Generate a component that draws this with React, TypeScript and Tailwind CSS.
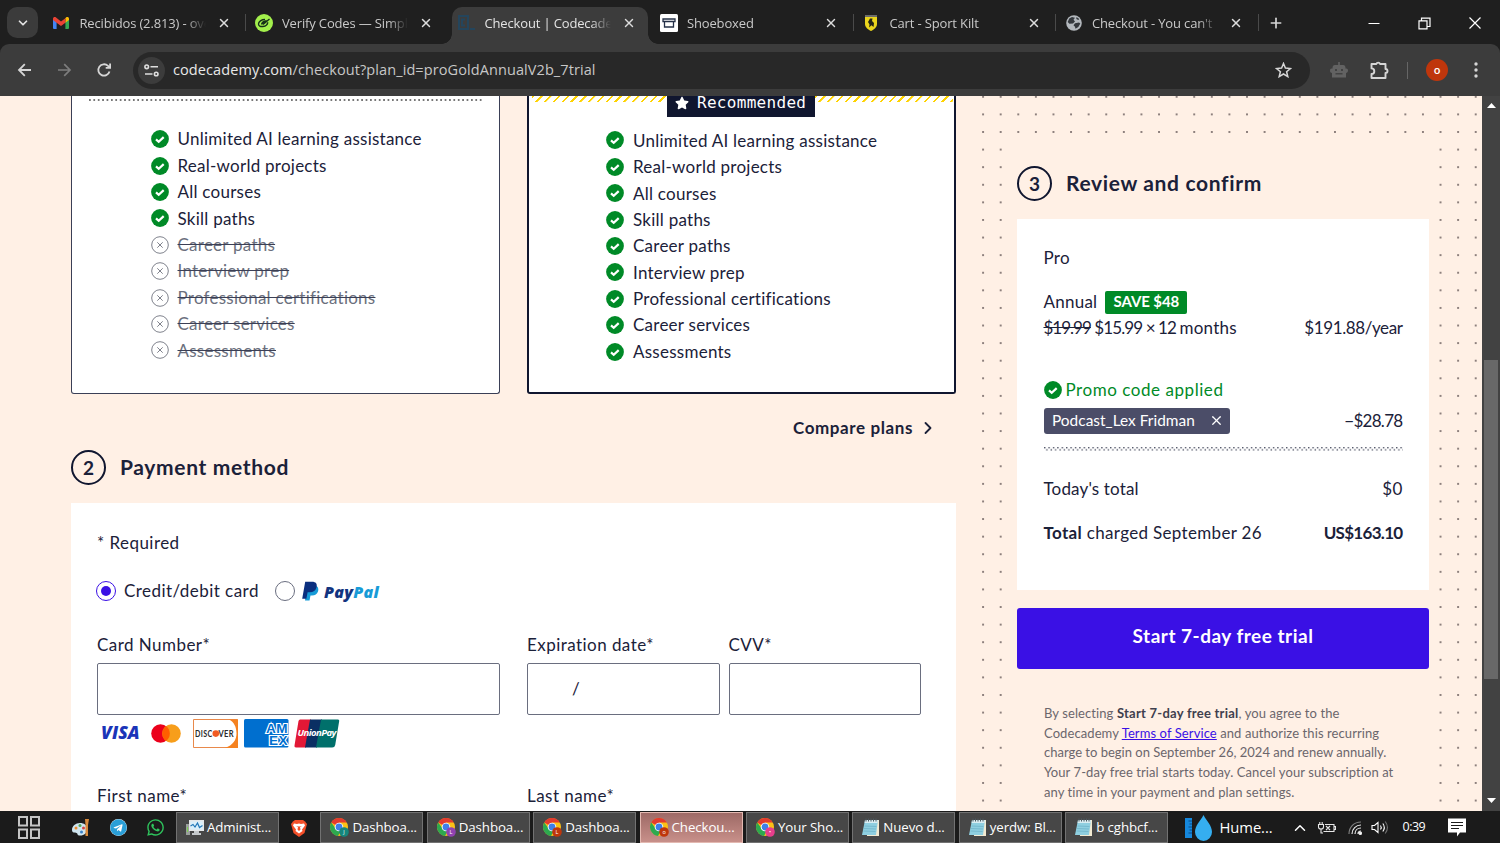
import { ReactNode } from "react";
import clsx from "clsx";
import { FaStar, FaTelegram, FaWhatsapp } from "react-icons/fa";
import { FiChevronDown, FiChevronRight, FiChevronUp, FiPlus, FiX } from "react-icons/fi";

type Feature = {
  label: string;
  included: boolean;
};

const featureNames = [
  "Unlimited AI learning assistance",
  "Real-world projects",
  "All courses",
  "Skill paths",
  "Career paths",
  "Interview prep",
  "Professional certifications",
  "Career services",
  "Assessments",
];

const basicFeatures: Feature[] = featureNames.map((label, index) => ({
  label,
  included: index < 4,
}));

const proFeatures: Feature[] = featureNames.map((label) => ({
  label,
  included: true,
}));

/* ---------- browser icons ---------- */

function GmailIcon() {
  return (
    <svg width="16" height="12" viewBox="0 0 16 12">
      <path d="M0 2v9a1 1 0 0 0 1 1h2.600V4.600z" fill="#4285f4" />
      <path d="M16 2v9a1 1 0 0 1-1 1h-2.600V4.600z" fill="#34a853" />
      <path d="M12.400 1.200v4.600L16 3.100V1.800C16 .2 14.200-.4 13 .6z" fill="#fbbc04" />
      <path d="M0 1.800C0 .2 1.800-.4 3 .6l5 3.800 4.400-3.200v4.600L8 9.100 3.600 5.800 0 3.100z" fill="#ea4335" />
    </svg>
  );
}

function SimplyIcon() {
  return (
    <svg width="18" height="18" viewBox="0 0 18 18">
      <circle cx="9" cy="9" r="9" fill="#a3f04c" />
      <g fill="none" stroke="#17301a" strokeWidth="1.400">
        <path d="M10 5.500C6.500 5.500 3.500 7.500 3.500 10c0 2 2 2.800 4.200 2.500 3-.4 5-2.300 5-4.300" />
        <path d="M6.500 10.500c.5-2 2-3.300 4-3.500l-2.500 3.500 6.500-5.500" />
      </g>
    </svg>
  );
}

function CodecademyIcon() {
  return (
    <svg width="18" height="18" viewBox="0 0 18 18" fill="none" stroke="#24455c" strokeWidth="2">
      <path d="M2 2h9v13H2zM8 5.500H5v6h3M13 15h5" />
    </svg>
  );
}

function ShoeboxedIcon() {
  return (
    <svg width="18" height="18" viewBox="0 0 18 18">
      <rect width="18" height="18" rx="1.500" fill="#fff" />
      <path d="M3 5h12v2.500H3zM4.500 8v5h9V8" fill="none" stroke="#253047" strokeWidth="1.300" />
    </svg>
  );
}

function KiltIcon() {
  return (
    <svg width="14" height="17" viewBox="0 0 14 17">
      <path d="M1 1h12v9c0 3.500-3 5.500-6 7-3-1.500-6-3.500-6-7z" fill="#ead51d" />
      <path d="M1 1h12v2H1z" fill="#6c6c6c" />
      <path d="M6 4.500h2.500L8 7l2 2-.5 4-2-1.800L5 13.500l.500-3L4 8z" fill="#242416" />
    </svg>
  );
}

function GlobeIcon() {
  return (
    <svg width="16" height="16" viewBox="0 0 16 16">
      <circle cx="8" cy="8" r="7.800" fill="#b3b8bd" />
      <path
        d="M3.200 3.600 6 2l3 .8-1.500 2L9 6.500l-2 2-3.600.2L1.700 7zM9 8.200l4-.8 1.300 1.200-2 3.400-2.800 1.800-.5-2-1.500-1.500zM10.500 2l2.800 2-1 1-2-1z"
        fill="#34383d"
      />
    </svg>
  );
}

type Tab = {
  title: string;
  icon: ReactNode;
  active?: boolean;
  separator?: boolean;
};

const tabs: Tab[] = [
  { title: "Recibidos (2.813) - overview", icon: <GmailIcon />, separator: true },
  { title: "Verify Codes — SimplyCodes", icon: <SimplyIcon /> },
  { title: "Checkout | Codecademy", icon: <CodecademyIcon />, active: true },
  { title: "Shoeboxed", icon: <ShoeboxedIcon />, separator: true },
  { title: "Cart - Sport Kilt", icon: <KiltIcon />, separator: true },
  { title: "Checkout - You can't", icon: <GlobeIcon />, separator: true },
];

function BrowserTab({ title, icon, active, separator }: Tab) {
  return (
    <div className="relative flex h-full w-[202.500px] shrink-0 items-end px-[3px]">
      {active && (
        <>
          <span className="absolute bottom-0 left-[-7px] size-[10px] bg-[radial-gradient(circle_at_0_0,transparent_9.500px,#3c3c3c_10px)]" />
          <span className="absolute right-[-7px] bottom-0 size-[10px] bg-[radial-gradient(circle_at_100%_0,transparent_9.500px,#3c3c3c_10px)]" />
        </>
      )}
      <div
        className={clsx(
          "flex h-[37px] w-full items-center rounded-t-[10px] pb-[6px] pl-[5px]",
          active && "bg-[#3c3c3c]"
        )}
      >
        <span className="flex w-[19px] justify-center">{icon}</span>
        <span
          className={clsx(
            "ml-[9px] w-[127px] overflow-hidden text-[13px] leading-5 tracking-[-0.15px] whitespace-nowrap",
            "[mask-image:linear-gradient(to_right,#000_106px,transparent_126px)]",
            active ? "text-[#e3e3e3]" : "text-[#c9c9c9]"
          )}
        >
          {title}
        </span>
        <FiX size={14} strokeWidth={2.500} className="ml-[10px] text-[#dcdcdc]" />
      </div>
      {separator && <span className="absolute top-[14px] right-0 h-[17px] w-px bg-[#4a4a4a]" />}
    </div>
  );
}

function TabStrip() {
  return (
    <div className="flex h-11 bg-[#1f1f1f] pl-[7px]">
      <button className="mt-[7px] mr-[5.500px] flex h-[31px] w-[31px] items-center justify-center rounded-[10px] bg-[#3b3b3b] text-[#e3e3e3]">
        <FiChevronDown size={14} strokeWidth={3} />
      </button>
      {tabs.map((tab) => (
        <BrowserTab key={tab.title} {...tab} />
      ))}
      <button className="mt-[15px] ml-[9px] flex size-4 items-center justify-center text-[#d6d6d6]">
        <FiPlus size={16} strokeWidth={2.500} />
      </button>
      <div className="mt-[15px] ml-auto flex h-4 items-center gap-[37px] pr-[18px] text-white">
        <svg width="14" height="14" viewBox="0 0 14 14" stroke="currentColor">
          <path d="M1.500 7.500h11" />
        </svg>
        <svg width="13" height="13" viewBox="0 0 13 13" fill="none" stroke="currentColor" strokeWidth="1.200">
          <path d="M1 3.800h8v8H1zM3.500 3.500V1.200H12V9.500H9.500" />
        </svg>
        <svg width="14" height="14" viewBox="0 0 14 14" stroke="currentColor" strokeWidth="1.200">
          <path d="m1.500 1.500 11 11m0-11-11 11" />
        </svg>
      </div>
    </div>
  );
}

function Toolbar() {
  return (
    <div className="bg-[#1f1f1f]">
      <div className="flex h-[52px] items-center rounded-t-[9px] bg-[#3c3c3c]">
        <svg className="ml-[17px]" width="16" height="16" viewBox="0 0 16 16" fill="none" stroke="#d6d6d6" strokeWidth="1.800">
          <path d="M14 8H2m5.800-5.800L2 8l5.800 5.800" />
        </svg>
        <svg className="ml-[23px]" width="16" height="16" viewBox="0 0 16 16" fill="none" stroke="#7d7d7d" strokeWidth="1.700">
          <path d="M2 8h12M8.200 2.200 14 8l-5.800 5.800" />
        </svg>
        <svg className="ml-[24px]" width="16" height="16" viewBox="0 0 16 16" fill="none" stroke="#d6d6d6" strokeWidth="1.800">
          <path d="M13.500 9.500A5.700 5.700 0 1 1 12 3.900l1.800 1.800M14.100 1.500v4.400H9.700" />
        </svg>
        <div className="ml-[21px] flex h-[37px] w-[1176.500px] items-center rounded-full bg-[#282828] pl-[5px]">
          <span className="flex size-[27px] items-center justify-center rounded-full bg-[#3c3c3c]">
            <svg width="15" height="13" viewBox="0 0 15 13" fill="none" stroke="#dedede" strokeWidth="1.600">
              <circle cx="2.700" cy="2.800" r="1.800" />
              <path d="M6.500 2.800H14M1 10h7.500" />
              <circle cx="12.200" cy="10" r="1.800" />
            </svg>
          </span>
          <span className="ml-[8px] text-[14.500px] tracking-[0.09px] text-[#c7c7c7]">
            <span className="text-[#e8e8e8]">codecademy.com</span>
            /checkout?plan_id=proGoldAnnualV2b_7trial
          </span>
          <svg className="mr-[18px] ml-auto" width="17" height="16" viewBox="0 0 17 16" fill="none" stroke="#d6d6d6" strokeWidth="1.500">
            <path d="m8.500 1.500 1.900 4.600 5 .4-3.800 3.200 1.200 4.900-4.300-2.600-4.300 2.600 1.200-4.900-3.800-3.200 5-.4z" />
          </svg>
        </div>
        <svg className="ml-[20px]" width="18" height="18" viewBox="0 0 18 18" fill="#626262">
          <path d="M8.200 1h1.600v3H13c2 0 2.500 1.500 2.500 3.500h1c1 0 1.500 1 1.500 2.200S17 12 16 12v4.500H2V12c-1 0-2-1-2-2.300s.5-2.200 1.500-2.200h1C2.500 5.500 3 4 5 4h3.200z" />
          <path d="M5 8h2v2H5zm6 0h2v2h-2zM5.500 12h7v1.500h-7z" fill="#424242" />
        </svg>
        <svg className="ml-[21px]" width="20" height="19" viewBox="0 0 20 19" fill="none" stroke="#d6d6d6" strokeWidth="1.900">
          <path d="M2.500 3h4.800a2 2 0 0 1 3.800 0H16.500v5a2 2 0 0 1 0 4v5h-14v-4a2.800 2.800 0 0 0 0-5.600z" strokeLinejoin="round" />
        </svg>
        <span className="ml-[18px] h-[17px] w-px bg-[#666]" />
        <span className="ml-[18.500px] flex size-[22px] items-center justify-center rounded-full bg-[#bf360c] text-[11px] font-semibold text-white">
          o
        </span>
        <svg className="ml-[26px]" width="4" height="16" viewBox="0 0 4 16" fill="#d6d6d6">
          <circle cx="2" cy="2" r="1.700" />
          <circle cx="2" cy="8" r="1.700" />
          <circle cx="2" cy="14" r="1.700" />
        </svg>
      </div>
    </div>
  );
}

/* ---------- checkout page ---------- */

function CheckIcon() {
  return (
    <svg className="shrink-0" width="18" height="18" viewBox="0 0 18 18">
      <circle cx="9" cy="9" r="8.900" fill="#008a27" />
      <path d="m5 9.400 2.700 2.400 5-4.700" fill="none" stroke="#fff" strokeWidth="2.200" />
    </svg>
  );
}

function CrossIcon() {
  return (
    <svg className="shrink-0" width="18" height="18" viewBox="0 0 18 18" fill="none" stroke="#70747f">
      <circle cx="9" cy="9" r="8.300" strokeWidth="0.900" />
      <path d="m6.300 6.300 5.400 5.400m0-5.400-5.400 5.400" strokeWidth="0.900" />
    </svg>
  );
}

function FeatureList({ features }: { features: Feature[] }) {
  return (
    <ul>
      {features.map(({ label, included }) => (
        <li key={label} className="flex h-[26.400px] items-center gap-[9px]">
          {included ? <CheckIcon /> : <CrossIcon />}
          <span className={clsx(!included && "text-[#6b6f7d] line-through decoration-[#3b3f55]")}>
            {label}
          </span>
        </li>
      ))}
    </ul>
  );
}

function StepTitle({ step, children }: { step: number; children: ReactNode }) {
  return (
    <h2 className="flex h-[35px] items-center text-[21px] leading-[28px] font-bold tracking-[0.65px]">
      <span className="mr-[14px] flex size-[35px] items-center justify-center rounded-full border-2 border-[#10162f] text-[19px] tracking-normal">
        {step}
      </span>
      <span className="pb-[2px]">{children}</span>
    </h2>
  );
}

function PlanCards() {
  return (
    <div className="flex gap-[27px]">
      <div className="h-[297.500px] w-[429px] rounded-b-[3px] border border-t-0 border-[#3a3f56] bg-white">
        <div className="mx-[17px] mt-[3px] h-[2px] bg-[linear-gradient(90deg,#777_1.500px,transparent_1.500px)] bg-[length:4.400px_1.500px] bg-repeat-x" />
        <div className="mt-[25px] pl-[78.500px]">
          <FeatureList features={basicFeatures} />
        </div>
      </div>
      <div className="h-[297.500px] w-[429px] rounded-b-[3px] border-2 border-t-0 border-[#10162f] bg-white">
        <div className="flex h-[21px] items-start">
          <span className="ml-[3px] h-[6px] w-[135px] bg-[repeating-linear-gradient(135deg,#ffd300_0px,#ffd300_1.500px,transparent_1.800px,transparent_6.220px)]" />
          <span className="flex h-[21px] w-[148px] items-center bg-[#10162f] pb-[8px] pl-[8px] font-['DejaVu_Sans_Mono',monospace] text-[16px] tracking-[0.3px] text-white">
            <FaStar size={14} className="mr-[8px] shrink-0" />
            Recommended
          </span>
          <span className="mr-px h-[6px] flex-1 bg-[repeating-linear-gradient(135deg,#ffd300_0px,#ffd300_1.500px,transparent_1.800px,transparent_6.220px)]" />
        </div>
        <div className="mt-[10.300px] pl-[77px]">
          <FeatureList features={proFeatures} />
        </div>
      </div>
    </div>
  );
}

function PayPalLogo() {
  return (
    <span className="flex items-center">
      <svg width="17" height="20" viewBox="0 0 17 20">
        <path d="M5 4.500h7.500c3.500.5 4.500 3 3.500 6-1 2.800-3 4-6 4H8.500l-1 5H3z" fill="#169bd7" />
        <path d="M3.200.8H10c4 0 5.400 2.200 4.600 5.400-.9 3.500-3.300 5-6.800 5H5.600l-1.200 6.600H.2z" fill="#0b2f7f" />
      </svg>
      <span className="mt-[2px] ml-[5px] font-['Open_Sans',sans-serif] text-[16px] leading-5 font-extrabold tracking-[0.3px] text-[#12347f] italic">
        Pay<span className="text-[#179bd7]">Pal</span>
      </span>
    </span>
  );
}

function CardBrands() {
  return (
    <div className="mt-[4px] flex h-[29px] items-center">
      <span className="ml-[4px] w-[40px] font-['Open_Sans',sans-serif] text-[17.500px] leading-none font-extrabold tracking-[0.1px] text-[#1a34b8] italic">
        VISA
      </span>
      <svg className="ml-[10px]" width="30" height="19" viewBox="0 0 30 19">
        <circle cx="9.500" cy="9.500" r="9.300" fill="#eb001b" />
        <circle cx="20.500" cy="9.500" r="9.300" fill="#f79e1b" />
        <path d="M15 2a9.300 9.300 0 0 1 0 15 9.300 9.300 0 0 1 0-15z" fill="#ff5f00" />
      </svg>
      <svg className="ml-[12px]" width="45" height="29" viewBox="0 0 45 29">
        <path d="M.5.500h44v28H.5z" fill="#fff" stroke="#e8894b" />
        <path d="M36 .500h9V29H32c8-3 11.500-8 11.500-14.500S41 3 36 .5z" fill="#f58220" />
        <text x="2" y="18" fontFamily="Lato, sans-serif" fontSize="9.500" fontWeight="700" fill="#2b2b2b" textLength="17.500" lengthAdjust="spacingAndGlyphs">
          DISC
        </text>
        <circle cx="22.800" cy="14.600" r="3.300" fill="#f15a22" />
        <text x="25.500" y="18" fontFamily="Lato, sans-serif" fontSize="9.500" fontWeight="700" fill="#2b2b2b" textLength="15.500" lengthAdjust="spacingAndGlyphs">
          VER
        </text>
      </svg>
      <svg className="ml-[6px]" width="45" height="29" viewBox="0 0 45 29" fontFamily="Liberation Sans, sans-serif" fontWeight="700">
        <rect width="44.500" height="28.500" rx="1.500" fill="#006fcf" />
        <g fill="#006fcf" stroke="#fff" strokeWidth="2.200" paintOrder="stroke" fontSize="12.500">
          <text x="22" y="13.500" textLength="22" lengthAdjust="spacingAndGlyphs">AM</text>
          <text x="25" y="26" textLength="19" lengthAdjust="spacingAndGlyphs">EX</text>
        </g>
      </svg>
      <svg className="ml-[5px]" width="46" height="29" viewBox="0 0 46 29">
        <path d="M6 .500h11l-5 28H2q-2 0-1.500-2L4.500 2Q5 .500 6 .500z" fill="#e21836" />
        <path d="M16 .500h12l-5 28H11z" fill="#0a2f63" />
        <path d="M27 .500h17q1.500 0 1.200 1.500l-4 24q-.500 2.500-3 2.500H22z" fill="#00706b" />
        <text x="3.500" y="17" fontFamily="Open Sans, sans-serif" fontSize="9.500" fontWeight="700" fontStyle="italic" fill="#fff" textLength="39.500">
          UnionPay
        </text>
      </svg>
    </div>
  );
}

type FieldProps = {
  label: string;
  className: string;
  children?: ReactNode;
};

function Field({ label, className, children }: FieldProps) {
  return (
    <label className={clsx("block", className)}>
      <span className="block h-[31px] leading-[26px]">{label}</span>
      <span className="flex h-[52px] items-center rounded-[2px] border border-[#6a6e7f] bg-white">
        {children}
      </span>
    </label>
  );
}

function PaymentForm() {
  return (
    <div className="h-[420px] bg-white pt-[26px] pl-[26px] tracking-[0.45px]">
      <p className="leading-[27px]">* Required</p>
      <div className="mt-[25px] ml-[-1px] flex h-[20px] items-center">
        <span className="mr-[8px] flex size-[20px] items-center justify-center rounded-full border border-[#3a10e5]">
          <span className="size-[10px] rounded-full bg-[#3a10e5]" />
        </span>
        <span className="w-[151px]">Credit/debit card</span>
        <span className="mr-[7px] size-[20px] rounded-full border border-[#6a6e7f]" />
        <PayPalLogo />
      </div>
      <div className="mt-[31px] flex">
        <Field label="Card Number*" className="w-[403px]" />
        <Field label="Expiration date*" className="ml-[27px] w-[193px]">
          <span className="pl-[44px]">/</span>
        </Field>
        <Field label="CVV*" className="ml-[8.500px] w-[192px]" />
      </div>
      <CardBrands />
      <div className="mt-[35.500px] flex">
        <Field label="First name*" className="w-[403px]" />
        <Field label="Last name*" className="ml-[27px] w-[394px]" />
      </div>
    </div>
  );
}

function Summary() {
  return (
    <div className="h-[371px] bg-white px-[26.500px] pt-[26px] leading-[26.400px]">
      <p>Pro</p>
      <div className="mt-[18px] flex items-center">
        Annual
        <span className="ml-[8px] h-[23px] w-[82px] rounded-[2px] bg-[#008a27] text-center text-[15px] leading-[21px] font-bold tracking-[-0.1px] text-white">
          SAVE $48
        </span>
      </div>
      <div className="flex justify-between">
        <span>
          <s className="tracking-[-1px]">$19.99</s>
          <span className="tracking-[-0.9px]"> $15.99 × 12 </span>
          months
        </span>
        <span className="tracking-[-0.4px]">$191.88/year</span>
      </div>
      <div className="mt-[35.500px] flex items-center gap-[4px] tracking-[0.55px] text-[#008a27]">
        <CheckIcon />
        Promo code applied
      </div>
      <div className="mt-[4px] flex h-[26px] items-center justify-between">
        <span className="flex h-[26px] w-[186px] items-center justify-between rounded-[3px] bg-[#4b4d68] pr-[6px] pl-[8.500px] text-[15.400px] tracking-[0.03px] text-white">
          Podcast_Lex Fridman
          <FiX size={15} />
        </span>
        <span className="pt-px tracking-[-0.7px]">−$28.78</span>
      </div>
      <svg className="mt-[13px] block h-[4px] w-full" fill="#4d5163">
        <pattern id="checker" width="4.400" height="4.400" patternUnits="userSpaceOnUse">
          <path d="M0 0h1.400v1.400H0zM2.200 2.200h1.400v1.400H2.200z" />
        </pattern>
        <rect width="100%" height="4" fill="url(#checker)" />
      </svg>
      <div className="mt-[25px] flex justify-between">
        <span className="tracking-[0.15px]">Today's total</span>
        <span>$0</span>
      </div>
      <div className="mt-[17.500px] flex justify-between">
        <span className="tracking-[0.33px]">
          <b>Total</b> charged September 26
        </span>
        <b className="tracking-[-0.7px]">US$163.10</b>
      </div>
    </div>
  );
}

function ReviewPanel() {
  return (
    <aside className="h-full w-[508px] bg-[radial-gradient(circle,#8d807d_0.900px,transparent_1.100px)] bg-[length:17.600px_17.600px] bg-[position:0.300px_-8px] pt-[45px] pl-[35px]">
      <div className="h-full w-[424px] bg-[#fff0e5] px-[8px] pt-[25px]">
        <StepTitle step={3}>Review and confirm</StepTitle>
        <div className="mt-[17.500px] w-[412px]">
          <Summary />
          <button className="mt-[18px] h-[61px] w-full rounded-[3px] bg-[#3a10e5] pb-[4px] text-[19px] font-bold tracking-[0.5px] text-white">
            Start 7-day free trial
          </button>
          <p className="mt-[35.500px] pl-[27px] text-[13px] leading-[19.700px] tracking-[0.09px] whitespace-nowrap text-[#6b666c]">
            By selecting <b className="tracking-[0.25px] text-[#3f3f4e]">Start 7-day free trial</b>, you agree to the
            <br />
            Codecademy <a className="text-[#3a10e5] underline">Terms of Service</a> and authorize this recurring
            <br />
            <span className="tracking-normal">charge to begin on September 26, 2024 and renew annually.</span>
            <br />
            Your 7-day free trial starts today. Cancel your subscription at
            <br />
            any time in your payment and plan settings.
          </p>
        </div>
      </div>
    </aside>
  );
}

function ScrollBar() {
  return (
    <div className="flex w-[18px] flex-col items-center bg-[#424242]">
      <svg className="mt-[7px]" width="9" height="5" viewBox="0 0 9 5" fill="#fff">
        <path d="M0 5 4.500 0 9 5z" />
      </svg>
      <div className="mt-[252px] h-[319px] w-[14px] bg-[#686868]" />
      <svg className="mt-[119px]" width="9" height="5" viewBox="0 0 9 5" fill="#fff">
        <path d="M0 0h9L4.500 5z" />
      </svg>
    </div>
  );
}

/* ---------- taskbar ---------- */

function ChromeIcon({ badge, letter }: { badge: string; letter: string }) {
  return (
    <svg className="shrink-0" width="19" height="19" viewBox="0 0 19 19">
      <circle cx="9" cy="9" r="9" fill="#fbc116" />
      <path d="M9 9 1.200 4.500A9 9 0 0 1 16.800 4.500H9z" fill="#e33b2e" />
      <path d="M1.200 4.500A9 9 0 0 0 8 17.950L12 10.500 6 11z" fill="#2da94f" />
      <circle cx="9" cy="9" r="4.300" fill="#fff" />
      <circle cx="9" cy="9" r="3.400" fill="#3f7fe8" />
      <circle cx="14" cy="14" r="4.800" fill={badge} />
      <text x="14" y="16" textAnchor="middle" fontSize="5.500" fill="#fff" fontFamily="Open Sans, sans-serif">
        {letter}
      </text>
    </svg>
  );
}

function NotepadIcon() {
  return (
    <svg className="shrink-0" width="18" height="19" viewBox="0 0 18 19">
      <path d="M4 2h13v16H5z" fill="#f2ead2" />
      <path d="M3 2h13l-2 15H0z" fill="#8fcfe0" />
      <path d="M3 2h13l-.4 3H2.600z" fill="#d9edf2" />
      <path d="M4 .500v3m2.500-3v3m2.500-3v3m2.500-3v3m2.500-3v3" stroke="#4d5a60" />
      <path d="m2.500 8 12 .5m-12.500 2 12 .5m-12.500 2 12 .5" stroke="#6fb4c9" strokeWidth="0.800" />
    </svg>
  );
}

function MonitorIcon() {
  return (
    <svg className="shrink-0" width="18" height="17" viewBox="0 0 18 17">
      <path d="M0 5h4v11H0z" fill="#9aa09c" />
      <path d="M1 8h1v5H1z" fill="#7ad04c" />
      <path d="M3 1h15v11H3z" fill="#e4e7e9" />
      <path d="M4.500 2.500h12v8h-12z" fill="#d9effa" />
      <path d="m4.500 7 2.500-1.500 2 2.500 2.500-4 2 4.500 3-2" fill="none" stroke="#2277b8" strokeWidth="1.200" />
      <path d="M8 12h5v2h2v2H6v-2h2z" fill="#c5c9cc" />
    </svg>
  );
}

type TaskProps = {
  title: string;
  icon: ReactNode;
  active?: boolean;
};

function Task({ title, icon, active }: TaskProps) {
  return (
    <div
      className={clsx(
        "mr-[3.400px] flex h-[31px] w-[103px] shrink-0 items-center border pl-[9px] text-[13.300px] tracking-[-0.1px] whitespace-nowrap text-white",
        active ? "border-[#e3b9b1] bg-linear-to-b from-[#9e6a66] to-[#c8908a]" : "border-[#727272] bg-[#474747]"
      )}
    >
      {icon}
      <span className="ml-[3px]">{title}</span>
    </div>
  );
}

function Taskbar() {
  return (
    <div className="flex h-8 items-center bg-[#1b1b1b] pt-px">
      <svg className="ml-[18px]" width="22" height="23" viewBox="0 0 22 23" fill="none" stroke="#c5c5c5" strokeWidth="2">
        <path d="M1 1h8v8.500H1zM13 1h8v8.500h-8zM1 13.500h8V22H1zM13 13.500h8V22h-8z" />
      </svg>
      <svg className="ml-[32px]" width="18" height="18" viewBox="0 0 18 18">
        <path d="M8 4c4 0 7 2 7 6s-3 7-8 6.500c-2-.2-1-2-2.500-2.500S0 14 0 11c0-4 3.500-7 8-7z" fill="#cfe5ef" />
        <circle cx="4" cy="9" r="1.500" fill="#ed8b2d" />
        <circle cx="8" cy="6.500" r="1.500" fill="#53a557" />
        <circle cx="11.500" cy="9" r="1.500" fill="#d64541" />
        <circle cx="9.500" cy="13" r="1.500" fill="#3980c6" />
        <path d="M13 0h4l-1 6v11h-2.500V6z" fill="#d98a3b" />
      </svg>
      <span className="ml-[19.500px] rounded-full bg-white">
        <FaTelegram size={17} color="#2a9fd8" />
      </span>
      <FaWhatsapp size={19} color="#2fc45d" className="mr-[11.500px] ml-[19px]" />
      <Task title="Administ..." icon={<MonitorIcon />} />
      <svg className="mr-[13px] ml-[9px]" width="16" height="18" viewBox="0 0 16 18">
        <path d="M4 1h8l2 1.500L16 5l-2.500 9L8 18l-5.500-4L0 5l2-2.500z" fill="#f4502a" />
        <path d="m3 4.500 3 .5 2-.5 2 .5 3-.5 1 2-3 4 .5 1.500L8 14.500 4.500 12 5 10.500l-3-4z" fill="#fff" />
        <path d="m5 7 2 1-.5 2.500L8 12l1.500-1.500L9 8l2-1-3 .5z" fill="#f4502a" />
      </svg>
      <Task title="Dashboa..." icon={<ChromeIcon badge="#16867c" letter="J" />} />
      <Task title="Dashboa..." icon={<ChromeIcon badge="#9142b0" letter="L" />} />
      <Task title="Dashboa..." icon={<ChromeIcon badge="#bf360c" letter="L" />} />
      <Task title="Checkou..." icon={<ChromeIcon badge="#bf360c" letter="o" />} active />
      <Task title="Your Sho..." icon={<ChromeIcon badge="#e83e8c" letter="•" />} />
      <Task title="Nuevo d..." icon={<NotepadIcon />} />
      <Task title="yerdw: Bl..." icon={<NotepadIcon />} />
      <Task title="b cghbcf..." icon={<NotepadIcon />} />
      <svg className="ml-[13px]" width="28" height="28" viewBox="0 0 28 28">
        <path d="M0 4h7v20H0z" fill="#1688dc" />
        <path d="M3.500 7H7M4.500 10H7M3.500 13H7M4.500 16H7M3.500 19H7" stroke="#0a4a86" />
        <path d="M18.500 1c3 6 8.500 10.500 8.500 17a8.500 9 0 0 1-17 0c0-6.500 5.500-11 8.500-17z" fill="#35aef0" />
      </svg>
      <span className="ml-[7px] w-[54px] text-[14.800px] tracking-[-0.1px] text-white">Hume...</span>
      <FiChevronUp size={18} className="ml-[17px] text-white" />
      <svg className="ml-[8px]" width="19" height="14" viewBox="0 0 19 14" fill="none" stroke="#e8e8e8" strokeWidth="1.100">
        <path d="M8 3.500h9v7H6.500M17 5.500h1.500v3H17M1.500 3.500h5v2.500q0 2-2.500 2T1.500 6zM2.800 3V1M5.200 3V1M4 8v4h2M9 5l4 4m0-4L9 9" />
      </svg>
      <svg className="ml-[12px]" width="14" height="14" viewBox="0 0 14 14" fill="none" stroke="#e8e8e8" strokeWidth="1.200">
        <path d="M1 13C1 6 6 1 13 1" stroke="#808080" />
        <path d="M4 13c0-5 4-9 9-9M7 13c0-3.500 2.500-6 6-6M10 13c0-2 1-3 3-3" />
        <circle cx="12.300" cy="12.300" r="1.200" fill="#fff" />
      </svg>
      <svg className="ml-[9px]" width="18" height="15" viewBox="0 0 18 15" fill="none" stroke="#fff" strokeWidth="1.100">
        <path d="M1 5.500h2.500L7 2.500v10L3.500 9.500H1zM9.500 5.500q1.500 2 0 4M11.800 3.500q3 4 0 8" />
        <path d="M14.200 1.500q4.500 6 0 12" stroke="#707070" />
      </svg>
      <span className="ml-[14px] w-[25px] text-[12.500px] tracking-[-0.5px] text-white">0:39</span>
      <svg className="ml-[20.500px]" width="18" height="19" viewBox="0 0 18 19">
        <path d="M0 .500h18v14h-6l-3 4v-4H0z" fill="#fff" />
        <path d="M3 4.500h12M3 7.500h12M3 10.500h8" stroke="#1b1b1b" strokeWidth="1.200" />
      </svg>
    </div>
  );
}

export default function App() {
  return (
    <div className="flex h-[843px] w-[1500px] flex-col overflow-hidden font-['Open_Sans',sans-serif]">
      <TabStrip />
      <Toolbar />
      <div className="flex h-[715px] shrink-0 overflow-hidden">
        <main className="flex h-full w-[1482px] bg-[#fff0e5] pl-[71px] font-['Lato',sans-serif] text-[17px] tracking-[0.25px] text-[#1b2139]">
          <div className="mr-[18px] w-[885px]">
            <PlanCards />
            <div className="mt-[21.500px] mr-[18px] flex h-[26px] items-center justify-end gap-[5px] font-bold tracking-[0.6px]">
              Compare plans
              <FiChevronRight size={20} strokeWidth={2.200} />
            </div>
            <div className="mt-[9px] mb-[17.500px]">
              <StepTitle step={2}>Payment method</StepTitle>
            </div>
            <PaymentForm />
          </div>
          <ReviewPanel />
        </main>
        <ScrollBar />
      </div>
      <Taskbar />
    </div>
  );
}
